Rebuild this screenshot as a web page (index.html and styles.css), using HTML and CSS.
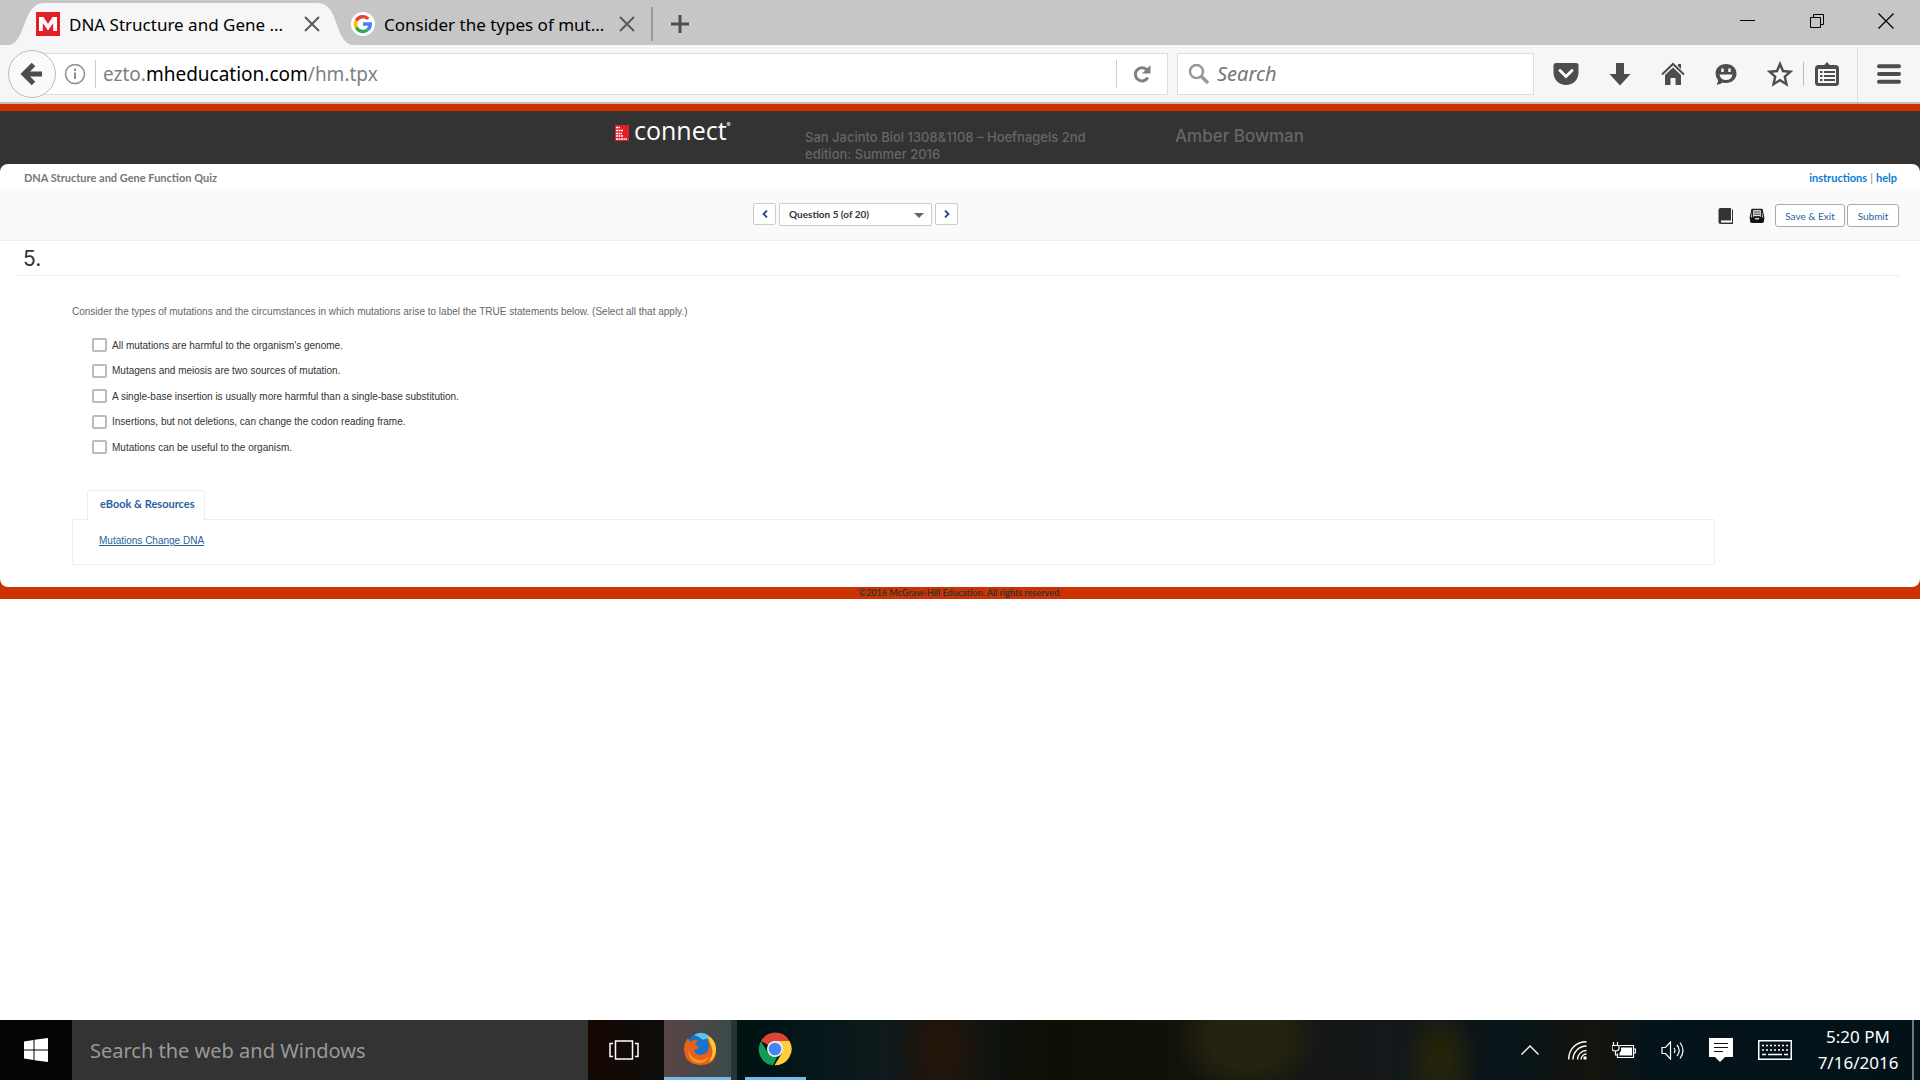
FILE: index.html
```html
<!DOCTYPE html>
<html lang="en">
<head>
<meta charset="utf-8">
<title>DNA Structure and Gene Function Quiz</title>
<link rel="stylesheet" href="styles.css">
</head>
<body>
<header class="browser">
  <div class="titlebar">
    <div class="tabs" role="tablist">
      <div class="tab tab-active" role="tab" aria-selected="true">
        <svg class="tab-shape" viewBox="0 0 346 42" preserveAspectRatio="none" aria-hidden="true"><path d="M0 42C18 42 14 0 36 0H310C332 0 326 42 346 42Z" fill="#f6f6f6"/></svg>
        <svg class="favicon" width="24" height="24" viewBox="0 0 24 24" aria-hidden="true"><path fill="#e21f26" d="M0 0h24v24H0z"/><path d="M3 19V5h4.500L12 12l4.500-7H21v14h-3.800v-8L12 18.500 6.800 11v8z" fill="#fff"/></svg>
        <span class="tab-title">DNA Structure and Gene ...</span>
        <button class="icon-btn" type="button" aria-label="Close tab"><svg width="16" height="16" viewBox="0 0 16 16"><path d="M1 1l14 14M15 1L1 15" stroke="#555" stroke-width="1.800"/></svg></button>
      </div>
      <div class="tab tab-second" role="tab" aria-selected="false">
        <svg class="favicon" width="24" height="24" viewBox="0 0 24 24" aria-hidden="true"><circle cx="12" cy="12" r="12" fill="#fff"/><g fill="none" stroke-width="3.400"><path d="M17.300 6.900A7.400 7.400 0 0 0 5.300 8.800" stroke="#ea4335"/><path d="M5.300 8.800a7.400 7.400 0 0 0 0 6.400" stroke="#fbbc05"/><path d="M5.300 15.200a7.400 7.400 0 0 0 11.400 2.500" stroke="#34a853"/><path d="M16.700 17.700A7.400 7.400 0 0 0 19.300 12H12" stroke="#4285f4"/></g></svg>
        <span class="tab-title">Consider the types of mut...</span>
        <button class="icon-btn" type="button" aria-label="Close tab"><svg width="16" height="16" viewBox="0 0 16 16"><path d="M1 1l14 14M15 1L1 15" stroke="#555" stroke-width="1.800"/></svg></button>
      </div>
      <button class="icon-btn new-tab" type="button" aria-label="New tab"><svg width="18" height="18" viewBox="0 0 18 18"><path d="M9 0v18M0 9h18" stroke="#4d4d4d" stroke-width="3"/></svg></button>
    </div>
    <div class="window-controls">
      <button class="icon-btn" type="button" aria-label="Minimize"><svg width="16" height="16" viewBox="0 0 16 16"><path d="M0 7.500h15" stroke="#000"/></svg></button>
      <button class="icon-btn" type="button" aria-label="Restore"><svg width="16" height="16" viewBox="0 0 16 16"><path d="M1.500 4.500h10v10h-10zM4.500 4.500v-3h10v10h-3" fill="none" stroke="#000"/></svg></button>
      <button class="icon-btn" type="button" aria-label="Close"><svg width="16" height="16" viewBox="0 0 16 16"><path d="M0.500 0.500l15 15M15.500 0.500l-15 15" stroke="#000" stroke-width="1.300"/></svg></button>
    </div>
  </div>
  <div class="navbar">
    <button class="back" type="button" aria-label="Back"><svg width="24" height="24" viewBox="0 0 24 24"><path d="M22 12H5M13.500 2.500L4 12l9.500 9.500" fill="none" stroke="#4d4d4d" stroke-width="5"/></svg></button>
    <div class="urlbar">
      <svg class="info" width="22" height="22" viewBox="0 0 22 22" aria-hidden="true"><circle cx="11" cy="11" r="9.500" fill="none" stroke="#8c8c8c" stroke-width="1.500"/><path d="M11 9.500V16M11 5.500v2.400" stroke="#8c8c8c" stroke-width="2"/></svg>
      <span class="url">ezto.<strong>mheducation.com</strong>/hm.tpx</span>
      <button class="icon-btn reload" type="button" aria-label="Reload"><svg width="18" height="18" viewBox="0 0 18 18"><path d="M14.800 12.500A6.600 6.600 0 1 1 13.500 4.500" fill="none" stroke="#808080" stroke-width="3"/><path d="M17.500 0v8.500H9z" fill="#808080"/></svg></button>
    </div>
    <label class="searchbar">
      <svg width="22" height="22" viewBox="0 0 22 22" aria-hidden="true"><circle cx="8.500" cy="8.500" r="6.500" fill="none" stroke="#999" stroke-width="2.500"/><path d="M13 13l7 7" stroke="#999" stroke-width="3.500"/></svg>
      <input type="text" placeholder="Search" aria-label="Search">
    </label>
    <div class="tools">
      <button class="icon-btn" type="button" aria-label="Pocket"><svg width="26" height="24" viewBox="0 0 26 24"><path d="M3 1h20q2.500 0 2.500 2.500V10.500C25.500 18 20 23 13 23S.500 18 .500 10.500V3.500Q.500 1 3 1z" fill="#4d4d4d"/><path d="M7 8.500l6 6 6-6" fill="none" stroke="#fff" stroke-width="3" stroke-linecap="round"/></svg></button>
      <button class="icon-btn" type="button" aria-label="Downloads"><svg width="24" height="24" viewBox="0 0 24 24"><path d="M8 1h8v11h6.500L12 23.500 1.500 12H8z" fill="#4d4d4d"/></svg></button>
      <button class="icon-btn" type="button" aria-label="Home"><svg width="24" height="24" viewBox="0 0 24 24"><path d="M1 12.500L12 2l11 10.500" fill="none" stroke="#4d4d4d" stroke-width="2"/><path d="M12 5.500l8 7.500v10h-5.500v-7h-5v7H4V13zM17 2h3v5l-3-3z" fill="#4d4d4d"/></svg></button>
      <button class="icon-btn" type="button" aria-label="Hello"><svg width="24" height="24" viewBox="0 0 24 24"><path d="M12 2c6 0 10.500 4 10.500 9.500S18 21 12 21q-2 0-3.500-.500Q6 23 2.500 22.500 4.500 20.500 4 18 1.500 15 1.500 11.500C1.500 6 6 2 12 2z" fill="#4d4d4d"/><path d="M5.500 12.500h13Q17.500 18 12 18t-6.500-5.500z" fill="#f6f6f6"/><path d="M8.500 6.500v3.500M15.500 6.500v3.500" stroke="#f6f6f6" stroke-width="2.500"/></svg></button>
      <span class="tool-pair">
        <button class="icon-btn" type="button" aria-label="Bookmark this page"><svg width="26" height="26" viewBox="0 0 26 26"><path d="M13 3l3 7 7.500.700-5.700 5 1.700 7.500-6.500-4-6.500 4 1.700-7.500-5.700-5L10 10z" fill="none" stroke="#4d4d4d" stroke-width="2.400"/></svg></button>
        <button class="icon-btn" type="button" aria-label="Bookmarks list"><svg width="24" height="24" viewBox="0 0 24 24"><rect x="1.500" y="4.500" width="21" height="18" rx="2" fill="none" stroke="#4d4d4d" stroke-width="3"/><path d="M8 4.500L12 0l4 4.500zM2 4h20v3H2z" fill="#4d4d4d"/><path d="M5 10h2.500M9 10h11M5 14h2.500M9 14h11M5 18h2.500M9 18h11" stroke="#4d4d4d" stroke-width="2"/></svg></button>
      </span>
    </div>
    <button class="icon-btn menu" type="button" aria-label="Open menu"><svg width="24" height="20" viewBox="0 0 24 20"><path d="M2 2.200h20M2 10h20M2 17.800h20" stroke="#4d4d4d" stroke-width="4" stroke-linecap="round"/></svg></button>
  </div>
</header>

<main class="page">
  <div class="banner">
    <div class="banner-inner">
      <div class="logo">
        <svg width="14" height="16" viewBox="0 0 14 16" aria-hidden="true"><path fill="#e21f26" d="M0 0h14v16H0z"/><path d="M1 2.500h4M1 5.500h7M1 8.500h6M1 11h7M1 14h11" stroke="#fff" stroke-width="1.300" stroke-dasharray="2 .5"/></svg>
        <span class="logo-name">connect</span><sup>®</sup>
      </div>
      <div class="course">San Jacinto Biol 1308&amp;1108 – Hoefnagels 2nd edition: Summer 2016</div>
      <div class="student">Amber Bowman</div>
    </div>
  </div>
  <section class="quiz">
    <div class="quiz-head">
      <h1>DNA Structure and Gene Function Quiz</h1>
      <div class="help-links"><a href="#instructions">instructions</a><span>|</span><a href="#help">help</a></div>
    </div>
    <div class="toolbar">
      <div class="pager">
        <button type="button" aria-label="Previous question"><svg width="6" height="8" viewBox="0 0 6 8"><path d="M5 .500L1.500 4 5 7.500" fill="none" stroke="#1d4f8c" stroke-width="1.800"/></svg></button>
        <span class="select-wrap"><select aria-label="Question"><option>Question 5 (of 20)</option></select></span>
        <button type="button" aria-label="Next question"><svg width="6" height="8" viewBox="0 0 6 8"><path d="M1 .500L4.500 4 1 7.500" fill="none" stroke="#1d4f8c" stroke-width="1.800"/></svg></button>
      </div>
      <div class="actions">
        <button class="icon-btn" type="button" aria-label="eBook"><svg width="16" height="16" viewBox="0 0 16 16"><path d="M2.500 0H13v12.500H3v2h11V1.500h1V16H2.500Q.500 16 .500 14V2Q.500 0 2.500 0z" fill="#333"/><path d="M3 13.500h10.500" stroke="#fff" stroke-width="1.200"/></svg></button>
        <button class="icon-btn" type="button" aria-label="References"><svg width="16" height="16" viewBox="0 0 16 16"><path d="M3.500 1.500h9v8h-9z" fill="#fff" stroke="#222" stroke-width="1.500"/><path d="M3 1L1 10.500M13 1l2 9.500" stroke="#222" stroke-width="1.200"/><path d="M5 4h6M5 6.200h6M5 8.400h6" stroke="#222"/><path d="M1 9.500h4l1.500 2h3l1.500-2h4V13q0 2-2 2H3q-2 0-2-2z" fill="#111"/></svg></button>
        <button class="btn btn-save" type="button">Save &amp; Exit</button>
        <button class="btn" type="button">Submit</button>
      </div>
    </div>
    <h2 class="number">5.</h2>
    <form class="question">
      <p>Consider the types of mutations and the circumstances in which mutations arise to label the TRUE statements below. (Select all that apply.)</p>
      <ul class="choices">
        <li><label><input type="checkbox">All mutations are harmful to the organism's genome.</label></li>
        <li><label><input type="checkbox">Mutagens and meiosis are two sources of mutation.</label></li>
        <li><label><input type="checkbox">A single-base insertion is usually more harmful than a single-base substitution.</label></li>
        <li><label><input type="checkbox">Insertions, but not deletions, can change the codon reading frame.</label></li>
        <li><label><input type="checkbox">Mutations can be useful to the organism.</label></li>
      </ul>
    </form>
    <div class="resources">
      <h3>eBook &amp; Resources</h3>
      <div class="resources-panel"><a href="#mutations">Mutations Change DNA</a></div>
    </div>
  </section>
  <footer class="copyright">©2016 McGraw-Hill Education. All rights reserved.</footer>
</main>

<nav class="taskbar" aria-label="Taskbar">
  <button class="task start" type="button" aria-label="Start"><svg width="24" height="24" viewBox="0 0 24 24"><path d="M0 3.500L9.500 2v9.500H0zM10.500 1.800L24 0v11.500H10.500zM0 12.500h9.500V22L0 20.500zM10.500 12.500H24V24l-13.500-1.800z" fill="#fff"/></svg></button>
  <input class="task-search" type="text" placeholder="Search the web and Windows" aria-label="Search the web and Windows">
  <button class="task task-view" type="button" aria-label="Task view"><svg width="30" height="20" viewBox="0 0 30 20"><path d="M6.500 1h17v18h-17zM4 3.500H1v13h3M26 3.500h3v13h-3" fill="none" stroke="#fff" stroke-width="1.500"/></svg></button>
  <button class="task firefox" type="button" aria-label="Firefox"><svg width="34" height="34" viewBox="0 0 34 34"><circle cx="18" cy="15" r="14" fill="#1a73c4"/><path d="M11 3q8-5 15 1-2 1-1 4-3-2-5 0-5-4-9-5z" fill="#5ac3f0"/><path d="M5 6q1 3 3 4 3-3 6-2 0 3-2 5 2 0 4 2-2 3-5 3 1 5 7 5 8-1 8-9 0-5-3-8 10 4 10 13 0 14-16 14Q2 32 1 18 1 10 5 6z" fill="#e8601c"/><path d="M24 3q9 5 9 14 0 9-7 13 5-8 3-14-2-5-5-13z" fill="#ffca28"/><path d="M5 15q0 8 7 12 8 3 14-2-3 6-10 6Q5 30 5 15z" fill="#f89a1c"/></svg></button>
  <button class="task chrome" type="button" aria-label="Chrome"><svg width="34" height="34" viewBox="0 0 34 34"><path d="M17 17L3 9a16.300 16.300 0 0 1 28.500 0z" fill="#db4437"/><path d="M17 9h14.500A16.300 16.300 0 0 1 16.500 33.300L24 21z" fill="#ffcd40"/><path d="M3 9l7 12 7 4-4.500 8A16.300 16.300 0 0 1 3 9z" fill="#0f9d58"/><path d="M10 21q3 5 9 4l-4 8.200-2-.200z" fill="#0f9d58"/><circle cx="17" cy="17" r="8" fill="#f1f1f1"/><circle cx="17" cy="17" r="6.300" fill="#4285f4"/></svg></button>
  <div class="tray">
    <svg class="tray-more" width="18" height="10" viewBox="0 0 18 10"><path d="M.500 9.500L9 1l8.500 8.500" fill="none" stroke="#fff" stroke-width="1.400"/></svg>
    <svg width="19" height="19" viewBox="0 0 19 19"><g fill="none" stroke="#fff" stroke-width="1.400"><path d="M.700 18.500C.700 8 8 .700 18.500.700M5 18.500C5 11 11 5 18.500 5M9.500 18.500c0-5 4-9 9-9M13 18.500c0-3 2.500-5.500 5.500-5.500"/></g><path d="M15.500 15.500h3v3h-3z" fill="#fff"/></svg>
    <svg width="24" height="17" viewBox="0 0 24 17"><path d="M8 3.500h13.500v12H5.500v-4M22 7h1.500v4H22" fill="none" stroke="#fff" stroke-width="1.200"/><path d="M9 5.500h11v8H7.500V11L9 9z" fill="#fff"/><path d="M1.500 0v3M5.500 0v3M0 3.500h7V6Q7 9 3.500 9T0 6zM3.500 9v4h2" fill="none" stroke="#fff" stroke-width="1.200"/></svg>
    <svg width="23" height="19" viewBox="0 0 23 19"><path d="M1 6.500h3.500L9.500 1v17l-5-5.500H1zM13 7q2 2.500 0 5M16 4q4.500 5.500 0 11M19 1.500q6 8 0 16" fill="none" stroke="#fff" stroke-width="1.200"/></svg>
    <svg width="24" height="24" viewBox="0 0 24 24"><path d="M0 0h24v19h-8l-5 5-5-5H0z" fill="#fff"/><path d="M5 5.500h14M5 9.500h14M5 13.500h9" stroke="#111"/></svg>
    <svg width="34" height="20" viewBox="0 0 34 20"><path d="M.750.750h32.500v18.500H.750z" fill="none" stroke="#fff" stroke-width="1.500"/><path d="M4 5.500h26M4 10h26" stroke="#fff" stroke-width="1.500" stroke-dasharray="2 2"/><path d="M4 14.500h4M10 14.500h14M26 14.500h4" stroke="#fff" stroke-width="1.500"/></svg>
  </div>
  <div class="clock"><time>5:20 PM</time><time datetime="2016-07-16">7/16/2016</time></div>
</nav>
</body>
</html>
```
FILE: styles.css
```css
* { box-sizing: border-box; }

body {
  margin: 0;
  min-height: 100vh;
  display: flex;
  flex-direction: column;
  background: #fff;
  font-family: "Lato", "Liberation Sans", sans-serif;
  font-size: 11px;
  color: #333;
}

button, input, select { font: inherit; color: inherit; }
h1, h2, h3, p, ul { margin: 0; padding: 0; font-weight: normal; }
svg { display: block; flex: none; }

.icon-btn {
  display: flex;
  align-items: center;
  justify-content: center;
  padding: 0;
  border: 0;
  background: none;
}

/* Browser window */
.browser, .taskbar { font-family: "Noto Sans", "Open Sans", sans-serif; }

.titlebar {
  display: flex;
  justify-content: space-between;
  height: 45px;
  background: #c6c6c6;
}
.tabs { display: flex; padding: 3px 0 0 8px; }
.tab {
  position: relative;
  display: flex;
  align-items: center;
  color: #000;
  font-size: 17px;
}
.tab-active { width: 346px; padding: 0 34px 0 28px; }
.tab-shape { position: absolute; inset: 0; width: 100%; height: 100%; }
.favicon, .tab-title, .tab .icon-btn { position: relative; }
.favicon { margin-right: 9px; }
.tab-title { flex: 1; white-space: nowrap; }
.tab-second { width: 302px; margin: 4px 0 4px -3px; padding-right: 16px; border-right: 2px solid #999; }
.new-tab { margin-left: 18px; }
.window-controls { display: flex; gap: 53px; align-items: center; padding: 0 26px 3px 0; }

.navbar {
  display: flex;
  align-items: center;
  height: 59px;
  padding-left: 8px;
  background: #f6f6f6;
  border-bottom: 2px solid #b9bcc0;
}
.back {
  position: relative;
  z-index: 1;
  display: flex;
  align-items: center;
  justify-content: center;
  width: 48px;
  height: 48px;
  padding: 0;
  border: 1px solid #bbb;
  border-radius: 50%;
  background: #fafafa;
}
.urlbar {
  flex: 1;
  display: flex;
  align-items: center;
  height: 42px;
  margin-left: -24px;
  padding-left: 31px;
  background: #fff;
  border: 1px solid #ddd;
}
.url {
  flex: 1;
  margin-left: 9px;
  padding-left: 7px;
  border-left: 1px solid #ccc;
  font-size: 19px;
  line-height: 28px;
  color: #808080;
}
.url strong { font-weight: normal; color: #000; }
.reload { width: 51px; height: 28px; border-left: 1px solid #ccc; }
.searchbar {
  display: flex;
  align-items: center;
  gap: 7px;
  width: 357px;
  height: 42px;
  margin-left: 9px;
  padding: 0 10px;
  background: #fff;
  border: 1px solid #ddd;
}
.searchbar input {
  flex: 1;
  min-width: 0;
  padding: 0;
  border: 0;
  font-size: 20px;
  font-style: italic;
}
input::placeholder { color: #757575; opacity: 1; }
.tools { display: flex; align-items: center; gap: 29px; padding: 0 18px 0 19px; }
.tool-pair { display: flex; align-items: center; }
.tool-pair .icon-btn + .icon-btn { margin-left: 10px; padding-left: 11px; border-left: 1px solid #bbb; height: 24px; }
.menu { width: 63px; height: 54px; border-left: 1px solid #ddd; }

/* Course page */
.page {
  flex: 1;
  background: linear-gradient(#333 200px, #c30 200px) no-repeat 0 0 / 100% 495px;
}
.banner { background: #333; border-top: 7px solid #c30; height: 60px; }
.banner-inner {
  display: flex;
  width: 690px;
  margin: 0 auto;
  color: #666;
  font-family: "Inter", sans-serif;
  font-weight: 500;
}
.logo { display: flex; width: 190px; padding-top: 14px; color: #fff; }
.logo svg { margin-right: 5px; }
.logo-name { font-family: "Open Sans", sans-serif; font-weight: normal; font-size: 25px; line-height: 24px; margin-top: -7px; }
.logo sup { font-size: 6px; line-height: 6px; margin-top: -3px; }
.course { width: 300px; padding-top: 18px; font-size: 13px; line-height: 17px; }
.student { margin-left: 70px; padding-top: 14px; font-size: 17px; line-height: 22px; }

.quiz {
  padding-bottom: 22px;
  background: #fff;
  border-radius: 8px;
}
.quiz-head {
  display: flex;
  justify-content: space-between;
  align-items: center;
  height: 27px;
  padding: 0 23px 0 24px;
}
.quiz-head h1 { font-size: 11px; font-weight: bold; color: #777; }
.help-links { display: flex; gap: 3px; font-size: 11px; color: #888; }
.help-links a { color: #0a7cd4; font-weight: bold; text-decoration: none; }

.toolbar {
  display: flex;
  align-items: center;
  height: 50px;
  padding-right: 21px;
  background: #fafafa;
  border-bottom: 1px solid #eee;
}
.pager { flex: 1; display: flex; justify-content: center; align-items: center; gap: 3px; margin-bottom: 3px; }
.pager button {
  display: flex;
  align-items: center;
  justify-content: center;
  width: 23px;
  height: 22px;
  padding: 0;
  background: #fff;
  border: 1px solid #ccc;
  border-radius: 2px;
}
.select-wrap { position: relative; display: flex; }
.select-wrap::after {
  content: "";
  position: absolute;
  right: 8px;
  top: 10px;
  border: 5px solid transparent;
  border-top-color: #666;
  border-bottom: 0;
}
.pager select {
  appearance: none;
  width: 153px;
  height: 23px;
  padding: 0 9px;
  background: #fff;
  border: 1px solid #ccc;
  border-radius: 2px;
  font-size: 10px;
  font-weight: bold;
}
.actions { display: flex; align-items: center; justify-content: flex-end; width: 188px; }
.actions .icon-btn { margin-right: 15px; }
.btn {
  flex: none;
  width: 52px;
  height: 23px;
  padding: 0;
  background: #fff;
  border: 1px solid #aaa;
  border-radius: 3px;
  font-size: 10px;
  color: #2a5f9e;
}
.btn-save { width: 70px; margin: 0 2px 0 -5px; }

.number {
  margin: 0 21px 0 17px;
  padding: 1px 0 0 6px;
  border-bottom: 1px solid #eee;
  font-family: "Inter", sans-serif;
  font-size: 21px;
  line-height: 33px;
}
.question, .resources-panel { font-family: "Liberation Sans", sans-serif; font-size: 10px; }
.question { padding: 28px 72px 0; }
.question p { line-height: 16px; color: #666; }
.choices { list-style: none; margin: 12px 0 0 20px; }
.choices li { height: 26px; display: flex; align-items: center; }
.choices li:nth-child(even) { height: 25px; }
.choices label { display: flex; align-items: center; gap: 5px; }
.choices input {
  appearance: none;
  width: 15px;
  height: 14px;
  margin: 0;
  background: #fff;
  border: 2px solid #bbb;
  border-radius: 2px;
}
.resources { margin: 30px 205px 0 72px; color: #2a5f9e; }
.resources h3 {
  position: relative;
  width: 118px;
  height: 30px;
  margin: 0 0 -1px 15px;
  padding-left: 12px;
  background: #fff;
  border: 1px solid #eee;
  border-bottom: 0;
  border-radius: 2px 2px 0 0;
  font-size: 11px;
  line-height: 26px;
  font-weight: bold;
}
.resources-panel { padding: 13px 26px 15px; border: 1px solid #eee; border-radius: 2px; line-height: 16px; }
.resources-panel a { color: #2a5f9e; }
.copyright {
  height: 12px;
  background: #c30;
  font-size: 9px;
  line-height: 12px;
  font-weight: bold;
  text-align: center;
}

/* Desktop taskbar */
.taskbar {
  display: flex;
  height: 60px;
  color: #fff;
  background:
    radial-gradient(ellipse 75px 60px at 65% 30%, #24230f 0 50%, transparent),
    radial-gradient(ellipse 40px 60px at 75% 70%, #25240a 0 20%, transparent),
    radial-gradient(ellipse 50px 90px at 49% 50%, #22150a 0 20%, transparent),
    linear-gradient(90deg, #050505 0 3%, #150803 31%, #001416 40%, #0f1a1c 46%, #0f0f05 55%, #12120c 62%, #14181a 72%, #071418 79%, #15130c 83%, #04141a 86%, #021218);
}
.task {
  display: flex;
  align-items: center;
  justify-content: center;
  padding: 0;
  border: 0;
  background: none;
}
.start { width: 72px; }
.task-search {
  width: 516px;
  padding: 0 18px;
  border: 0;
  background: #333;
  font-size: 20px;
}
.task-search::placeholder { color: #999; }
.task-view { width: 76px; padding-right: 4px; }
.firefox { width: 67px; padding-left: 4px; background: linear-gradient(90deg, #5a4444, #3c4a4a); border-bottom: 3px solid #76b9ed; box-shadow: 6px 0 #263638; }
.chrome { width: 61px; margin-left: 14px; padding-right: 2px; border-bottom: 3px solid #76b9ed; }
.tray { display: flex; align-items: center; gap: 25px; margin: 0 12px 0 auto; }
.tray-more { margin-right: 4px; }
.clock {
  display: flex;
  flex-direction: column;
  justify-content: center;
  width: 110px;
  margin-right: 6px;
  border-right: 2px solid #70787a;
  font-size: 17px;
  line-height: 26px;
  text-align: center;
}
```
